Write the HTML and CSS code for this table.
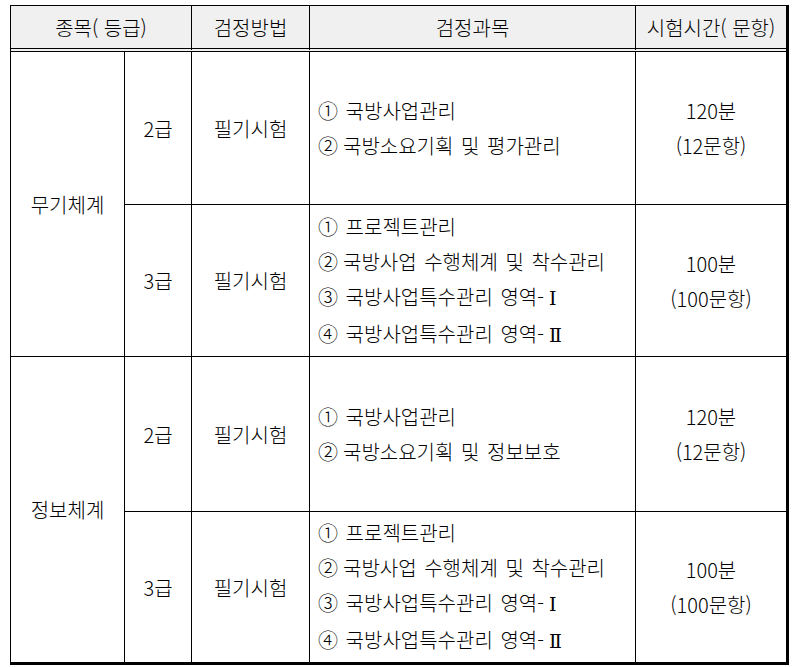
FILE: index.html
```html
<!DOCTYPE html>
<html lang="ko">
<head>
<meta charset="utf-8">
<title>검정과목</title>
<link rel="stylesheet" href="styles.css">
</head>
<body>
<div class="page">
<table class="exam">
  <colgroup>
    <col class="w-kind">
    <col class="w-grade">
    <col class="w-method">
    <col class="w-subject">
    <col class="w-time">
  </colgroup>
  <thead>
    <tr class="h-head">
      <th colspan="2">종목( 등급)</th>
      <th>검정방법</th>
      <th>검정과목</th>
      <th class="c-last">시험시간( 문항)</th>
    </tr>
  </thead>
  <tbody>
    <tr class="h-r1">
      <td rowspan="2">무기체계</td>
      <td>2급</td>
      <td>필기시험</td>
      <td class="subj">① 국방사업관리<br>②&#8197;국방소요기획 및 평가관리</td>
      <td class="c-last time">120분<br>(12문항)</td>
    </tr>
    <tr class="h-r2">
      <td>3급</td>
      <td>필기시험</td>
      <td class="subj">① 프로젝트관리<br>②&#8197;국방사업 수행체계 및 착수관리<br>③ 국방사업특수관리 영역-<span class="roman">Ⅰ</span><br>④ 국방사업특수관리 영역-<span class="roman">Ⅱ</span></td>
      <td class="c-last time">100분<br>(100문항)</td>
    </tr>
    <tr class="h-r3">
      <td rowspan="2" class="r-last">정보체계</td>
      <td>2급</td>
      <td>필기시험</td>
      <td class="subj">① 국방사업관리<br>②&#8197;국방소요기획 및 정보보호</td>
      <td class="c-last time">120분<br>(12문항)</td>
    </tr>
    <tr class="h-r4">
      <td class="r-last">3급</td>
      <td class="r-last">필기시험</td>
      <td class="subj r-last">① 프로젝트관리<br>②&#8197;국방사업 수행체계 및 착수관리<br>③ 국방사업특수관리 영역-<span class="roman">Ⅰ</span><br>④ 국방사업특수관리 영역-<span class="roman">Ⅱ</span></td>
      <td class="c-last r-last time">100분<br>(100문항)</td>
    </tr>
  </tbody>
</table>
</div>
</body>
</html>
```

FILE: styles.css
```css
html, body {
  margin: 0;
  padding: 0;
  background: #ffffff;
}

.page {
  padding: 5px 0 0 10px;
}

.exam {
  width: 779px;
  table-layout: fixed;
  border-collapse: separate;
  border-spacing: 0;
  border-top: 1px solid #000;
  border-left: 1px solid #000;
  border-right: 3px solid #000;
  border-bottom: 3px solid #000;
  font-family: "Noto Sans CJK KR", "Noto Sans", sans-serif;
  font-size: 20px;
  font-weight: 300;
  color: #000;
}

.w-kind { width: 114px; }
.w-grade { width: 67px; }
.w-method { width: 118px; }
.w-subject { width: 326px; }
.w-time { width: 150px; }

.exam th,
.exam td {
  box-sizing: border-box;
  padding: 0;
  border-right: 1px solid #000;
  border-bottom: 1px solid #000;
  text-align: center;
  vertical-align: middle;
  font-weight: 300;
  line-height: 35px;
  white-space: nowrap;
}

.exam th {
  background: #f0f0f0;
  border-bottom: 4px double #000;
}

.exam .c-last { border-right: none; }
.exam .r-last { border-bottom: none; }

.exam .subj {
  text-align: left;
  padding-left: 8px;
  word-spacing: 2px;
}

.roman {
  font-family: "DejaVu Serif", "Liberation Serif", serif;
  font-size: 19px;
  font-weight: 300;
  margin-left: 5px;
}

.h-head { height: 46px; }
.h-r1 { height: 153px; }
.h-r2 { height: 152px; }
.h-r3 { height: 155px; }
.h-r4 { height: 150px; }
```
